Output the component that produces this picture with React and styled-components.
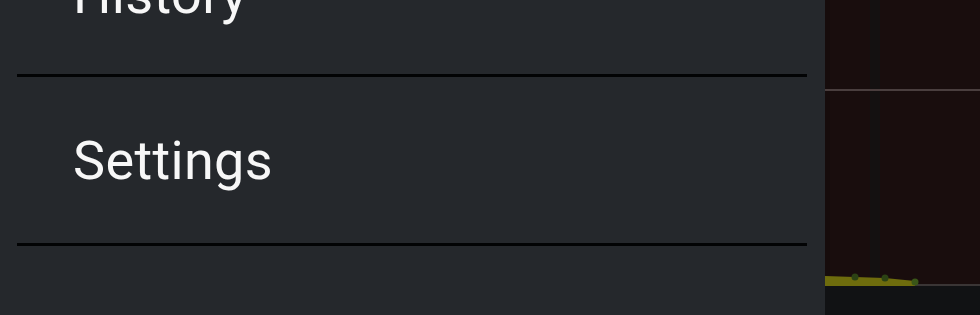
import React from "react";
import styled, { createGlobalStyle } from "styled-components";

const GlobalStyle = createGlobalStyle`
  html, body {
    margin: 0;
    padding: 0;
    background: #25282c;
    overflow: hidden;
  }
`;

const Screen = styled.div`
  width: 980px;
  height: 315px;
  display: flex;
  overflow: hidden;
  background: #25282c;
`;

const Drawer = styled.nav`
  width: 825px;
  flex-shrink: 0;
  background: #25282c;
  display: flex;
  flex-direction: column;
  padding: 0 18px 0 17px;
  box-sizing: border-box;
  margin-top: -92px;
`;

const Item = styled.div`
  height: 166px;
  flex-shrink: 0;
  display: flex;
  align-items: center;
  padding-left: 56px;
  padding-top: ${({ offset }) => offset || 0}px;
  box-sizing: border-box;
  color: #f7f7f7;
  font-family: Roboto, "Noto Sans", sans-serif;
  font-size: 54px;
  letter-spacing: 0.35px;
`;

const Divider = styled.div`
  height: 3px;
  flex-shrink: 0;
  background: #020304;
`;

const ChartPanel = styled.div`
  flex: 1;
  height: 315px;
  background: #190d0d;
`;

const Chart = () => (
  <svg width="155" height="315" viewBox="0 0 155 315">
    <rect x="0" y="0" width="155" height="315" fill="#190d0d" />
    <rect x="0" y="0" width="5" height="285" fill="#160c0c" />
    <rect x="45" y="0" width="10" height="285" fill="#141111" />
    <rect x="0" y="89" width="155" height="2" fill="#4a3e3e" />
    <rect x="0" y="285" width="155" height="30" fill="#111214" />
    <rect x="90" y="284" width="65" height="2" fill="#3a3535" />
    <polygon points="0,276 30,277 60,278 90,281 90,286 0,286" fill="#6e6c0d" />
    <circle cx="30" cy="277" r="3.5" fill="#2c4214" />
    <circle cx="60" cy="278" r="3.5" fill="#2c4214" />
    <circle cx="90" cy="282" r="3.5" fill="#3a5618" />
  </svg>
);

export default function App() {
  return (
    <>
      <GlobalStyle />
      <Screen>
        <Drawer>
          <Item offset={6}>History</Item>
          <Divider />
          <Item>Settings</Item>
          <Divider />
        </Drawer>
        <ChartPanel>
          <Chart />
        </ChartPanel>
      </Screen>
    </>
  );
}
